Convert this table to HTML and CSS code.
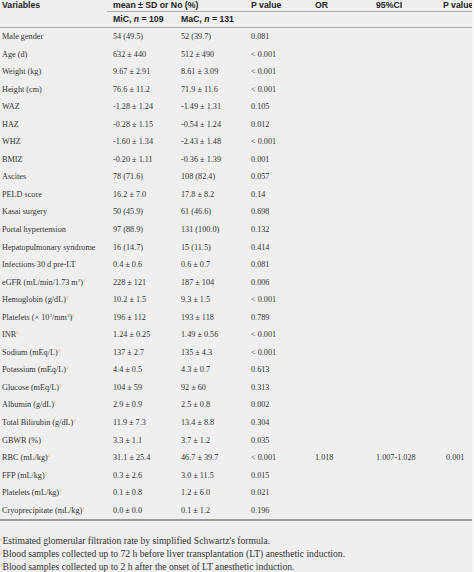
FILE: index.html
```html
<!DOCTYPE html>
<html>
<head>
<meta charset="utf-8">
<link rel="stylesheet" href="styles.css">
</head>
<body>
<div class="page">
<table class="tbl">
  <colgroup>
    <col class="c1"><col class="c2"><col class="c3"><col class="c4"><col class="c5"><col class="c6"><col class="c7">
  </colgroup>
  <thead>
    <tr class="h1">
      <th class="var" rowspan="2">Variables</th>
      <th class="grp" colspan="2">mean ± SD or No (%)</th>
      <th class="grp">P value</th>
      <th class="grp">OR</th>
      <th class="grp">95%CI</th>
      <th class="grp last">P value</th>
    </tr>
    <tr class="h2">
      <th>MiC, <i>n</i> = 109</th>
      <th>MaC, <i>n</i> = 131</th>
      <th></th><th></th><th></th><th></th>
    </tr>
  </thead>
  <tbody>
    <tr><td>Male gender</td><td>54 (49.5)</td><td>52 (39.7)</td><td>0.081</td><td></td><td></td><td></td></tr>
    <tr><td>Age (d)</td><td>632 ± 440</td><td>512 ± 490</td><td>&lt; 0.001</td><td></td><td></td><td></td></tr>
    <tr><td>Weight (kg)</td><td>9.67 ± 2.91</td><td>8.61 ± 3.09</td><td>&lt; 0.001</td><td></td><td></td><td></td></tr>
    <tr><td>Height (cm)</td><td>76.6 ± 11.2</td><td>71.9 ± 11.6</td><td>&lt; 0.001</td><td></td><td></td><td></td></tr>
    <tr><td>WAZ</td><td>-1.28 ± 1.24</td><td>-1.49 ± 1.31</td><td>0.105</td><td></td><td></td><td></td></tr>
    <tr><td>HAZ</td><td>-0.28 ± 1.15</td><td>-0.54 ± 1.24</td><td>0.012</td><td></td><td></td><td></td></tr>
    <tr><td>WHZ</td><td>-1.60 ± 1.34</td><td>-2.43 ± 1.48</td><td>&lt; 0.001</td><td></td><td></td><td></td></tr>
    <tr><td>BMIZ</td><td>-0.20 ± 1.11</td><td>-0.36 ± 1.39</td><td>0.001</td><td></td><td></td><td></td></tr>
    <tr><td>Ascites</td><td>78 (71.6)</td><td>108 (82.4)</td><td>0.057</td><td></td><td></td><td></td></tr>
    <tr><td>PELD score</td><td>16.2 ± 7.0</td><td>17.8 ± 8.2</td><td>0.14</td><td></td><td></td><td></td></tr>
    <tr><td>Kasai surgery</td><td>50 (45.9)</td><td>61 (46.6)</td><td>0.698</td><td></td><td></td><td></td></tr>
    <tr><td>Portal hypertension</td><td>97 (88.9)</td><td>131 (100.0)</td><td>0.132</td><td></td><td></td><td></td></tr>
    <tr><td>Hepatopulmonary syndrome</td><td>16 (14.7)</td><td>15 (11.5)</td><td>0.414</td><td></td><td></td><td></td></tr>
    <tr><td>Infections 30 d pre-LT</td><td>0.4 ± 0.6</td><td>0.6 ± 0.7</td><td>0.081</td><td></td><td></td><td></td></tr>
    <tr><td>eGFR (mL/min/1.73 m<sup>2</sup>)<sup class="fn">1</sup></td><td>228 ± 121</td><td>187 ± 104</td><td>0.006</td><td></td><td></td><td></td></tr>
    <tr><td>Hemoglobin (g/dL)<sup class="fn">2</sup></td><td>10.2 ± 1.5</td><td>9.3 ± 1.5</td><td>&lt; 0.001</td><td></td><td></td><td></td></tr>
    <tr><td>Platelets (× 10<sup>3</sup>/mm<sup>3</sup>)<sup class="fn">2</sup></td><td>196 ± 112</td><td>193 ± 118</td><td>0.789</td><td></td><td></td><td></td></tr>
    <tr><td>INR<sup class="fn">2</sup></td><td>1.24 ± 0.25</td><td>1.49 ± 0.56</td><td>&lt; 0.001</td><td></td><td></td><td></td></tr>
    <tr><td>Sodium (mEq/L)<sup class="fn">2</sup></td><td>137 ± 2.7</td><td>135 ± 4.3</td><td>&lt; 0.001</td><td></td><td></td><td></td></tr>
    <tr><td>Potassium (mEq/L)<sup class="fn">2</sup></td><td>4.4 ± 0.5</td><td>4.3 ± 0.7</td><td>0.613</td><td></td><td></td><td></td></tr>
    <tr><td>Glucose (mEq/L)<sup class="fn">2</sup></td><td>104 ± 59</td><td>92 ± 60</td><td>0.313</td><td></td><td></td><td></td></tr>
    <tr><td>Albumin (g/dL)<sup class="fn">2</sup></td><td>2.9 ± 0.9</td><td>2.5 ± 0.8</td><td>0.002</td><td></td><td></td><td></td></tr>
    <tr><td>Total Bilirubin (g/dL)<sup class="fn">2</sup></td><td>11.9 ± 7.3</td><td>13.4 ± 8.8</td><td>0.304</td><td></td><td></td><td></td></tr>
    <tr><td>GBWR (%)</td><td>3.3 ± 1.1</td><td>3.7 ± 1.2</td><td>0.035</td><td></td><td></td><td></td></tr>
    <tr><td>RBC (mL/kg)<sup class="fn">3</sup></td><td>31.1 ± 25.4</td><td>46.7 ± 39.7</td><td>&lt; 0.001</td><td>1.018</td><td>1.007-1.028</td><td class="lastd">0.001</td></tr>
    <tr><td>FFP (mL/kg)<sup class="fn">3</sup></td><td>0.3 ± 2.6</td><td>3.0 ± 11.5</td><td>0.015</td><td></td><td></td><td></td></tr>
    <tr><td>Platelets (mL/kg)<sup class="fn">3</sup></td><td>0.1 ± 0.8</td><td>1.2 ± 6.0</td><td>0.021</td><td></td><td></td><td></td></tr>
    <tr class="end"><td>Cryoprecipitate (mL/kg)<sup class="fn">3</sup></td><td>0.0 ± 0.0</td><td>0.1 ± 1.2</td><td>0.196</td><td></td><td></td><td></td></tr>
  </tbody>
</table>
<div class="notes">
  <p><sup class="fn">1</sup>Estimated glomerular filtration rate by simplified Schwartz's formula.</p>
  <p><sup class="fn">2</sup>Blood samples collected up to 72 h before liver transplantation (LT) anesthetic induction.</p>
  <p><sup class="fn">3</sup>Blood samples collected up to 2 h after the onset of LT anesthetic induction.</p>
</div>
</div>
</body>
</html>
```

FILE: styles.css
```css
html, body {
  margin: 0;
  padding: 0;
  background: #f0f0f0;
}
.page {
  width: 474px;
  height: 572px;
  box-sizing: border-box;
  border-right: 2px solid #f8f8f8;
  background: #efefef;
  overflow: hidden;
}
.tbl {
  width: 474px;
  border-collapse: collapse;
  table-layout: fixed;
  font-family: "Liberation Serif", "Times New Roman", serif;
  font-size: 8.2px;
  color: #333;
}
.c1 { width: 107px; }
.c2 { width: 74px; }
.c3 { width: 70px; }
.c4 { width: 64px; }
.c5 { width: 61px; }
.c6 { width: 67px; }
.c7 { width: 31px; }
.tbl th {
  font-family: "Liberation Sans", Arial, sans-serif;
  font-weight: bold;
  font-size: 8.7px;
  color: #222;
  text-align: left;
  padding: 0;
  white-space: nowrap;
}
.tbl th i { font-style: italic; }
.h1 th {
  height: 11px;
  line-height: 10px;
  vertical-align: top;
  padding-top: 0;
}
.h1 .grp { border-bottom: 1px solid #aaa; }
.h1 .var {
  vertical-align: top;
  padding-left: 2px;
  border-bottom: 1px solid #aaa;
}
.h1 th:nth-child(2) { padding-left: 6px; }
.h1 .last { padding-left: 0; }
.h2 th {
  height: 15px;
  line-height: 15px;
  border-bottom: 1px solid #aaa;
}
.h2 th:first-child { padding-left: 6px; }
.tbl td {
  height: 17.55px;
  padding: 0;
  line-height: 17.55px;
  white-space: nowrap;
  vertical-align: middle;
}
.tbl td:first-child { padding-left: 2px; }
.tbl td:nth-child(2) { padding-left: 6px; }
.tbl td.lastd { padding-left: 3px; }
.tbl tr.end td { border-bottom: 2px solid #9a9a9a; }
sup {
  font-size: 5px;
  line-height: 0;
  vertical-align: 3px;
}
sup.fn { color: #e0a040; }
.notes {
  padding-top: 13px;
  font-family: "Liberation Serif", "Times New Roman", serif;
  font-size: 9.6px;
  color: #333;
}
.notes p {
  margin: 0;
  line-height: 13px;
  white-space: nowrap;
}
```
